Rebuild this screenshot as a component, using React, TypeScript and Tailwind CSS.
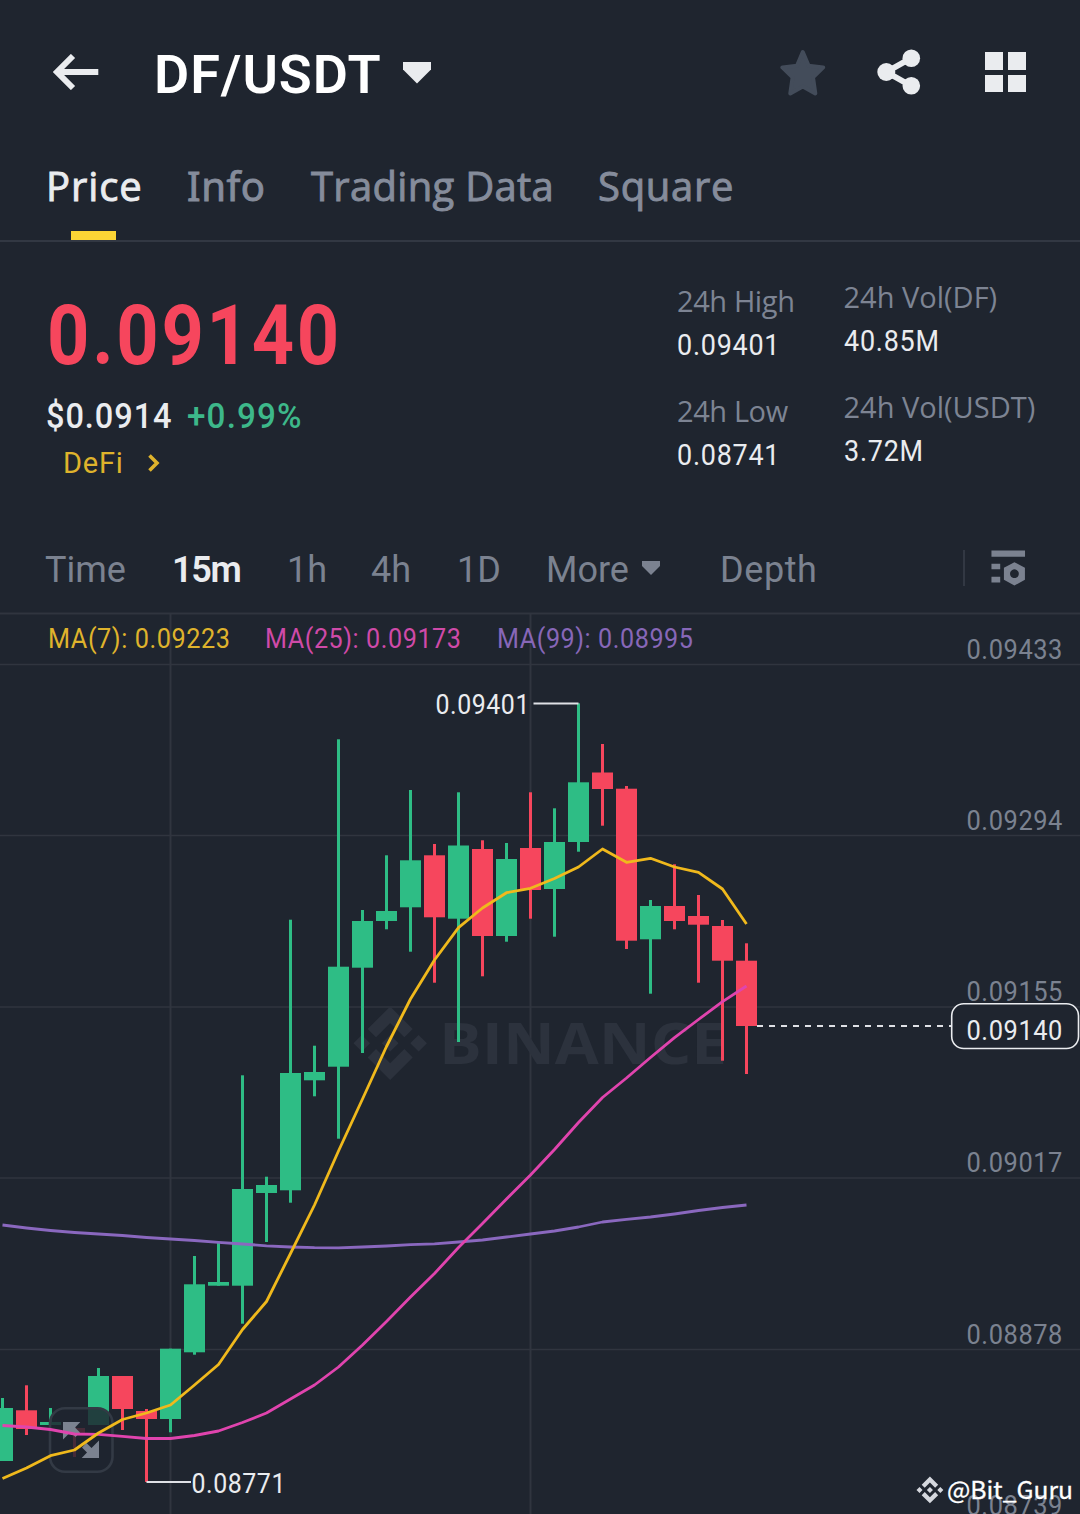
import React from "react";

type Candle = { o: number; top: number; bottom: number; low: number; up: boolean };

const STEP = 24;
const FIRST_X = 2.5;

// wick top, body top, body bottom, wick bottom, rising
const RAW: [number, number, number, number, number][] = [
  [1398, 1408, 1461, 1461, 1],
  [1385.3, 1410.3, 1429, 1435, 0],
  [1408, 1422, 1425, 1425, 1],
  [1427, 1428, 1434, 1457, 0],
  [1368, 1376, 1425, 1425, 1],
  [1376, 1376, 1409, 1430, 0],
  [1409, 1411, 1419, 1482, 0],
  [1348.7, 1348.7, 1419, 1432.3, 1],
  [1256, 1284.3, 1352.3, 1354.7, 1],
  [1242, 1282, 1285.7, 1285.7, 1],
  [1075.3, 1189, 1285.7, 1323.7, 1],
  [1176.7, 1185, 1193, 1242, 1],
  [919.7, 1073, 1190.3, 1202.7, 1],
  [1045.7, 1072, 1080.3, 1096.3, 1],
  [739.3, 966.7, 1066.7, 1138.7, 1],
  [910, 921, 967.7, 1053, 1],
  [855.3, 911, 921, 929.3, 1],
  [790, 860.3, 907.3, 951.7, 1],
  [844, 855.3, 917.3, 982.7, 0],
  [792.3, 845.5, 918.7, 1042, 1],
  [840.3, 849, 936, 976.3, 0],
  [843, 859, 936, 941.7, 1],
  [792.3, 848, 890, 918.7, 0],
  [808.3, 842, 889, 936.7, 1],
  [703.3, 782.3, 842, 851.7, 1],
  [744, 772.5, 789, 825.7, 0],
  [786, 788.7, 940.7, 949, 0],
  [900, 906, 939.3, 993.7, 1],
  [864.3, 906, 921, 929.3, 0],
  [895, 916, 924.7, 982.7, 0],
  [920, 926, 960.7, 1060.7, 0],
  [943.3, 960.7, 1026, 1074, 0],
];

const CANDLES: Candle[] = RAW.map(([o, top, bottom, low, up]) => ({ o, top, bottom, low, up: up === 1 }));

const MA7 =
  "2.5,1478.5 26.5,1468 50.5,1455.7 74.5,1450 98.5,1433 122.5,1419.5 146.5,1413 170.5,1405 194.5,1385 218.5,1364.5 242.5,1329.5 266.5,1301.5 290.5,1253.5 314.5,1205 338.5,1151 362.5,1099 386.5,1046.5 410.5,999 434.5,960 458.5,927.7 482.5,908 506.5,892.7 530.5,888.3 554.5,878.5 578.5,867 602.5,849 626.5,862.3 650.5,858.3 674.5,867 698.5,872.3 722.5,889 746.5,924";
const MA25 =
  "2.5,1425.5 26.5,1427 50.5,1429.5 74.5,1434 98.5,1434.3 122.5,1436.3 146.5,1438.5 170.5,1438.5 194.5,1435.5 218.5,1431 242.5,1422.5 266.5,1413 290.5,1399 314.5,1385 338.5,1367 362.5,1345 386.5,1321.5 410.5,1297 434.5,1273.5 458.5,1247.5 482.5,1223.5 506.5,1199 530.5,1175 554.5,1149.5 578.5,1122.5 602.5,1097.5 626.5,1078 650.5,1057.5 674.5,1037.7 698.5,1019.5 722.5,1001.7 746.5,986";
const MA99 =
  "2.5,1225 26.5,1228 50.5,1230.5 74.5,1232.5 98.5,1234 122.5,1235.5 146.5,1237.5 170.5,1239 194.5,1240.5 218.5,1242.3 242.5,1244 266.5,1245.8 290.5,1247 314.5,1247.7 338.5,1247.8 362.5,1247 386.5,1246 410.5,1244.7 434.5,1243.8 458.5,1242 482.5,1240 506.5,1237 530.5,1234 554.5,1231 578.5,1227 602.5,1222 626.5,1219.3 650.5,1217 674.5,1214 698.5,1210.5 722.5,1207.5 746.5,1205";

const AXIS: [string, number][] = [
  ["0.09433", 659],
  ["0.09294", 830],
  ["0.09155", 1001],
  ["0.09017", 1172],
  ["0.08878", 1344],
  ["0.08739", 1515],
];

const GRID_Y = [664.5, 835.5, 1007, 1178, 1349.5];

const BINANCE_MARK =
  "M16.624 13.9202l2.7175 2.7154-7.353 7.353-7.353-7.352 2.7175-2.7164 4.6355 4.6595 4.6356-4.6595zm4.6366-4.6366L24 12l-2.7154 2.7164L18.5682 12l2.6924-2.7164zm-9.272.001l2.7163 2.6914-2.7164 2.7174v-.001L9.2721 12l2.7164-2.7154zm-9.2722-.001L5.4088 12l-2.6914 2.6924L0 12l2.7164-2.7164zM11.9885.0115l7.353 7.329-2.7174 2.7154-4.6356-4.6356-4.6355 4.6595-2.7174-2.7154 7.353-7.353z";

function Num({ x, y, w, fill, children }: { x: number; y: number; w: number; fill: string; children: string }) {
  return (
    <text
      x={x + 0.5}
      y={y}
      fontSize="27"
      fill={fill}
      textLength={w + 0.5}
      lengthAdjust="spacingAndGlyphs"
      className="font-['Roboto',sans-serif] tracking-[0.6px]"
    >
      {children}
    </text>
  );
}

function Header() {
  return (
    <header className="flex h-[144px] items-center pl-[52px] pr-[54px]">
      <svg className="h-9 w-[47px]" viewBox="52 54 47 36" fill="none" stroke="#eaecef" strokeWidth="6">
        <path d="M73 56 L57 72 L73 88 M57 72 H98.3" />
      </svg>
      <h1 className="ml-[55px] w-[249px] whitespace-nowrap pt-[5px] font-['Roboto',sans-serif] text-[54px] font-semibold leading-none tracking-[1px] text-white">
        DF/USDT
      </h1>
      <svg className="mt-0.5 h-[22px] w-7" viewBox="0 0 28 22" fill="#eaecef">
        <path d="M0 0H28V7.5L14 21.5L0 7.5Z" />
      </svg>
      <svg className="ml-auto h-12 w-12" viewBox="779 48 48 48" fill="#434c5a" stroke="#434c5a" strokeWidth="4" strokeLinejoin="round">
        <path d="M802.8 52 L808.6 65.8 L823.2 67.4 L813 77.4 L815.3 93.4 L802.8 86.4 L790.3 93.4 L792.6 77.4 L782.4 67.4 L797 65.8 Z" />
      </svg>
      <svg className="ml-[49px] h-12 w-12" viewBox="876 48 48 48" fill="#eaecef" stroke="#eaecef">
        <path d="M911.3 58 L886.5 72 L911.3 86" fill="none" strokeWidth="6" />
        <circle cx="911.3" cy="58.2" r="8.8" stroke="none" />
        <circle cx="886.3" cy="72" r="9" stroke="none" />
        <circle cx="911.3" cy="85.8" r="8.8" stroke="none" />
      </svg>
      <div className="ml-[61px] grid h-10 w-[41px] grid-cols-2 grid-rows-2 gap-[5px]">
        <i className="bg-[#eaecef]" />
        <i className="bg-[#eaecef]" />
        <i className="bg-[#eaecef]" />
        <i className="bg-[#eaecef]" />
      </div>
    </header>
  );
}

function Tabs() {
  return (
    <nav className="flex h-[98px] whitespace-nowrap border-b-2 border-[#323843] pl-[46px] font-['Open_Sans',sans-serif] text-[40px] leading-[83px] text-[#858c9b] [-webkit-text-stroke:0.9px]">
      <div className="relative w-[141px] tracking-[0.9px] text-[#eaecef]">
        Price
        <span className="absolute bottom-0 left-[25px] h-[9px] w-[45px] bg-[#fcd535]" />
      </div>
      <div className="w-[124px] font-['Noto_Sans',sans-serif] tracking-[0.6px]">Info</div>
      <div className="w-[286px] tracking-[0.3px]">Trading Data</div>
      <div className="pl-px tracking-[0.7px]">Square</div>
    </nav>
  );
}

function Stat({ label, value }: { label: string; value: string }) {
  return (
    <div className="whitespace-nowrap text-[29px] leading-[44px]">
      <div className="font-['Open_Sans',sans-serif] text-[#7d8493]">{label}</div>
      <div className="w-fit origin-left scale-x-[0.93] font-['Roboto',sans-serif] tracking-[0.8px] text-[#eaecef]">{value}</div>
    </div>
  );
}

function Summary() {
  return (
    <section className="flex h-[286px] whitespace-nowrap font-['Roboto',sans-serif]">
      <div className="w-[677px] pl-[46px] pt-[44px]">
        <div className="ml-px w-fit origin-left scale-x-[0.88] text-[84px] font-bold leading-[100px] tracking-[3.1px] text-[#f6465d]">
          0.09140
        </div>
        <div className="mt-[11px] flex text-[35px] font-medium leading-10">
          <div className="w-[141px]">
            <div className="w-fit origin-left scale-x-[0.93] tracking-[1px] text-[#eaecef]">$0.0914</div>
          </div>
          <div className="origin-left scale-x-[0.95] tracking-[1.2px] text-[#3db88a]">+0.99%</div>
        </div>
        <div className="mt-[6px] flex h-10 items-center pl-[17px] text-[29px] leading-10 text-[#dfb32c]">
          <span className="w-[85px] tracking-[0.8px]">DeFi</span>
          <svg className="h-[18px] w-3" viewBox="0 0 12 18" fill="none" stroke="#dfb32c" strokeWidth="3.6">
            <path d="M1.5 1.5 L9 9 L1.5 16.5" />
          </svg>
        </div>
      </div>
      <div className="flex w-[166px] flex-col gap-[22px] pt-[37px] tracking-[-0.4px]">
        <Stat label="24h High" value="0.09401" />
        <Stat label="24h Low" value="0.08741" />
      </div>
      <div className="flex flex-col gap-[22px] pl-[0.5px] pt-[33px]">
        <Stat label="24h Vol(DF)" value="40.85M" />
        <Stat label="24h Vol(USDT)" value="3.72M" />
      </div>
    </section>
  );
}

function Intervals() {
  return (
    <div className="flex h-[84px] items-center whitespace-nowrap pl-[45px] pr-[54px] font-['Roboto',sans-serif] text-[36px] leading-none text-[#7b8290]">
      <span className="w-[127px]">Time</span>
      <span className="w-[115px] font-semibold tracking-[-1.3px] text-[#eaecef]">15m</span>
      <span className="w-[84px]">1h</span>
      <span className="w-[86px]">4h</span>
      <span className="w-[89px]">1D</span>
      <span className="w-[96px]">More</span>
      <svg className="mb-1 h-[14px] w-[18px]" viewBox="0 0 18 14" fill="#7b8290">
        <path d="M0 0H18V5L9 14L0 5Z" />
      </svg>
      <span className="ml-[60px] tracking-[0.6px]">Depth</span>
      <span className="mb-1 ml-auto h-9 w-[2px] bg-[#323843]" />
      <svg className="mb-1 ml-[25px] h-9 w-[36px]" viewBox="990 549.5 36 37" fill="#7b8290">
        <path d="M991 550H1025.5V556.4H991ZM991 563.6H1000V569.4H991ZM991 577H1000V582.8H991Z" />
        <path
          fillRule="evenodd"
          d="M1014.6 562 L1025.4 567.8 V580 L1014.6 586 L1003.8 580 V567.8 Z M1014.6 569.4 a4.5 4.5 0 1 0 0.01 0 Z"
        />
      </svg>
    </div>
  );
}

function Chart() {
  return (
    <svg className="block h-[902px] w-[1080px]" viewBox="0 612 1080 902">
      <g stroke="#30353f" strokeWidth="2">
        <path d="M0 613.5H1080" />
        {GRID_Y.map((y) => (
          <path key={y} d={`M0 ${y}H1080`} strokeWidth="1.6" />
        ))}
        <path d="M170.5 614V1514M530.5 614V1514" />
      </g>

      <g fill="#2c323d">
        <path transform="translate(353.5 1006.5) scale(3.06)" d={BINANCE_MARK} />
        <text
          x="439"
          y="1064"
          fontSize="58"
          fontWeight="700"
          textLength="288"
          lengthAdjust="spacingAndGlyphs"
          className="font-['Open_Sans',sans-serif]"
        >
          BINANCE
        </text>
      </g>

      {CANDLES.map((c, i) => {
        const x = FIRST_X + i * STEP;
        return (
          <g key={i} fill={c.up ? "#2ebd85" : "#f6465d"}>
            <rect x={x - 1.5} y={c.o} width="3" height={c.low - c.o} />
            <rect x={x - 10.5} y={c.top} width="21" height={c.bottom - c.top} />
          </g>
        );
      })}

      <rect x="50" y="1408.3" width="62.5" height="63.5" rx="15" fill="#1f252f" fillOpacity="0.82" stroke="#333a45" strokeWidth="2.6" />
      <g fill="#7b8290">
        <path d="M63 1422H80.3L75 1427.5L80 1432.5L75.5 1437L70.5 1432L63 1439.5Z" />
        <path d="M99 1458H81.7L87 1452.5L82 1447.5L86.5 1443L91.5 1448L99 1440.5Z" />
      </g>

      <g fill="none" strokeWidth="2.8" strokeLinejoin="round">
        <polyline points={MA99} stroke="#8a68bf" />
        <polyline points={MA25} stroke="#e044ae" />
        <polyline points={MA7} stroke="#f0b91c" />
      </g>

      <g stroke="#dfe1e6" strokeWidth="1.8">
        <path d="M533.5 703.5H578.5M146.5 1482H191" />
        <path d="M757 1026H951" strokeDasharray="6 6" />
      </g>
      <Num x={435} y={714} w={94} fill="#eaecef">0.09401</Num>
      <Num x={191} y={1493} w={94} fill="#eaecef">0.08771</Num>

      <Num x={47.5} y={648} w={182} fill="#dfb32c">MA(7): 0.09223</Num>
      <Num x={264.5} y={648} w={196} fill="#cf4aa8">MA(25): 0.09173</Num>
      <Num x={496.5} y={648} w={196} fill="#8767b8">MA(99): 0.08995</Num>

      {AXIS.map(([label, y]) => (
        <Num key={label} x={966} y={y} w={96} fill="#7b8290">
          {label}
        </Num>
      ))}

      <rect x="951.7" y="1003.7" width="126.8" height="44.8" rx="12" fill="#1f252f" stroke="#eaecef" strokeWidth="1.6" />
      <Num x={966} y={1040} w={96} fill="#eaecef">0.09140</Num>

      <path transform="translate(916.5 1476.5) scale(1.12)" d={BINANCE_MARK} fill="#d5d8de" />
      <text
        x="947"
        y="1499"
        fontSize="24"
        fill="#ffffff"
        stroke="#ffffff"
        strokeWidth="0.3"
        textLength="126"
        lengthAdjust="spacingAndGlyphs"
        className="font-['Noto_Sans_CJK_SC',sans-serif]"
      >
        @Bit_Guru
      </text>
    </svg>
  );
}

export default function App() {
  return (
    <main className="h-[1514px] w-[1080px] overflow-hidden bg-[#1f252f]">
      <Header />
      <Tabs />
      <Summary />
      <Intervals />
      <Chart />
    </main>
  );
}
